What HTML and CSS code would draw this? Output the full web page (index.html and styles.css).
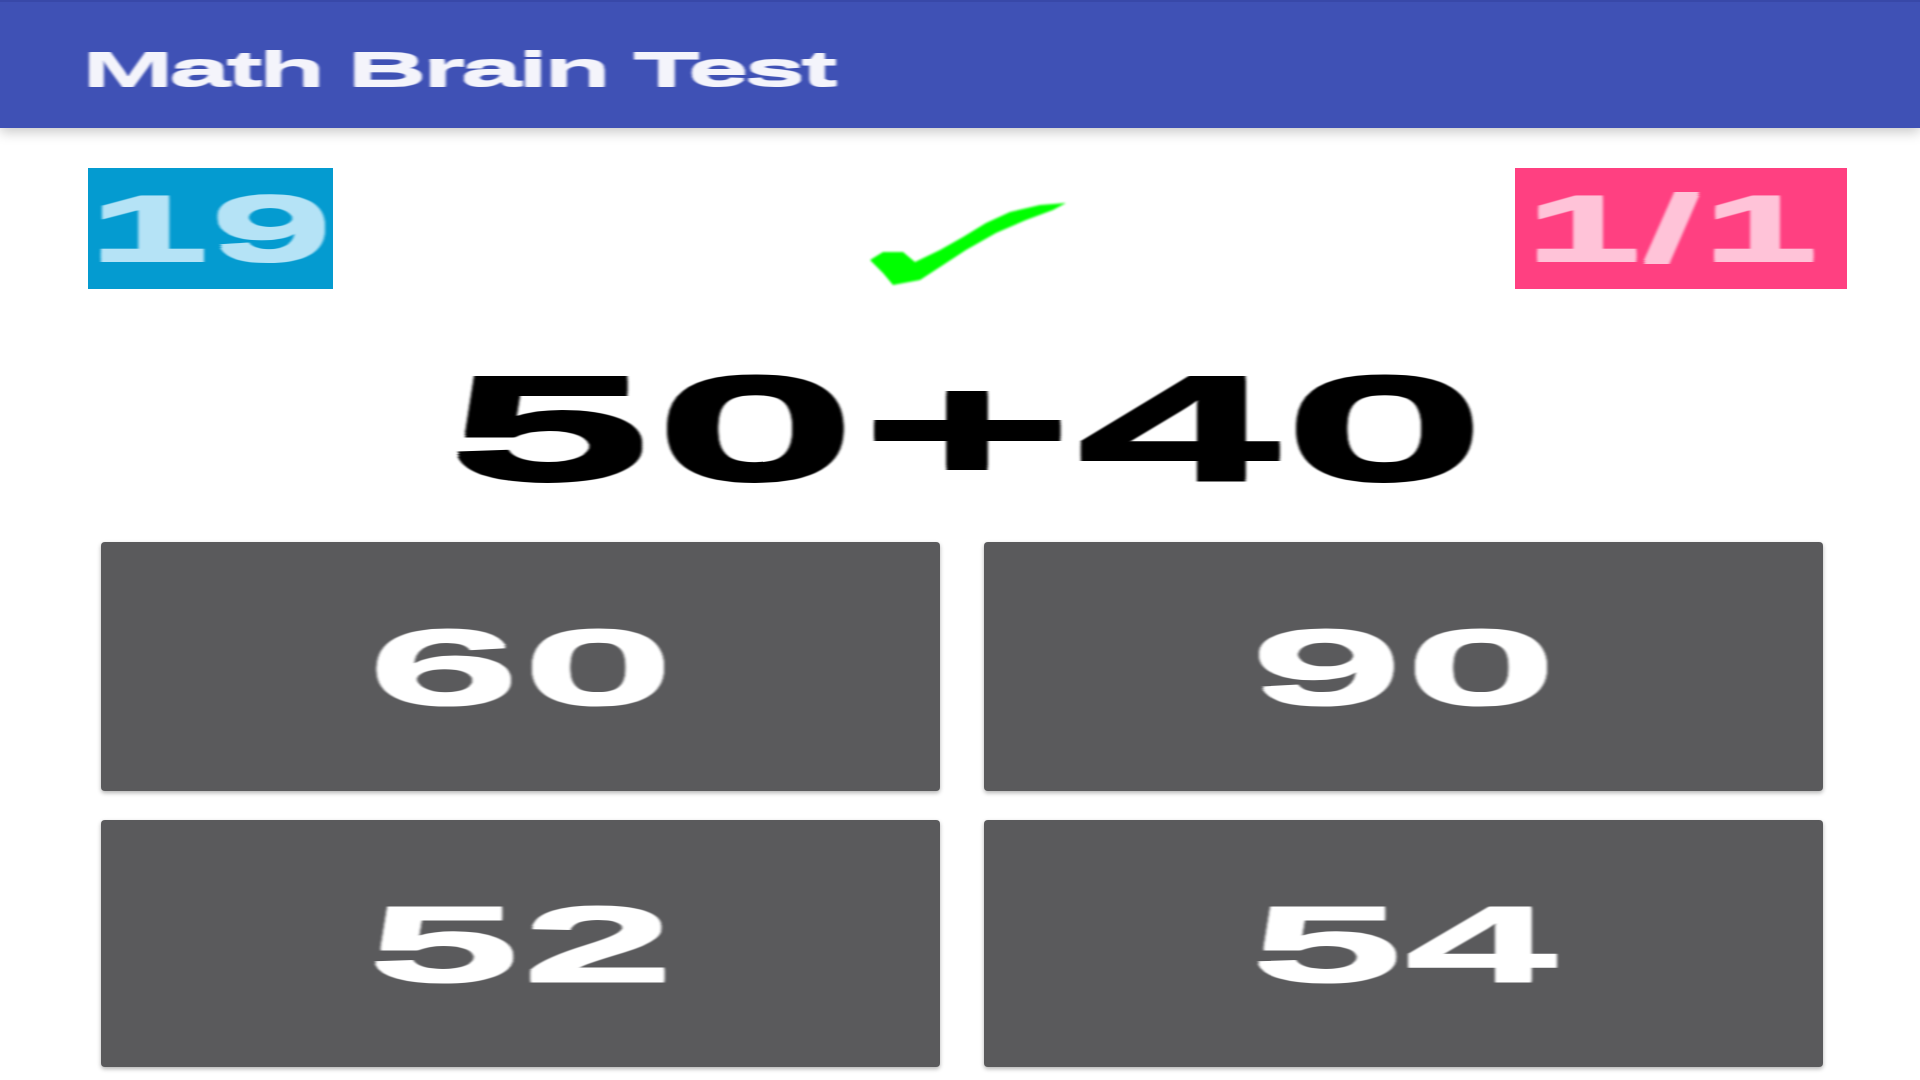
FILE: index.html
```html
<!DOCTYPE html>
<html lang="en">
<head>
  <meta charset="UTF-8">
  <meta name="viewport" content="width=device-width, initial-scale=1.0">
  <title>Math Brain Test</title>
  <link rel="stylesheet" href="styles.css">
</head>
<body>
  <header class="toolbar">
    <h1 class="toolbar-title"><span class="wide">Math Brain Test</span></h1>
  </header>

  <main class="game">
    <div class="status-row">
      <div class="timer"><span class="stretch">19</span></div>
      <svg class="check" viewBox="0 0 230 110" width="230" height="110" aria-label="correct">
        <polygon points="17,70 30,62 50,62 62,72 87,60 110,47 133,33 157,22 187,15 213,13 200,20 173,30 143,43 113,60 87,77 67,90 40,95 30,83" fill="#00ff00"/>
      </svg>
      <div class="score"><span class="stretch">1/1</span></div>
    </div>

    <div class="question"><span class="stretch">50+40</span></div>

    <div class="answers">
      <button class="answer"><span class="stretch">60</span></button>
      <button class="answer"><span class="stretch">90</span></button>
      <button class="answer"><span class="stretch">52</span></button>
      <button class="answer"><span class="stretch">54</span></button>
    </div>
  </main>
</body>
</html>
```

FILE: styles.css
```css
* {
  margin: 0;
  padding: 0;
  box-sizing: border-box;
  font-family: 'Liberation Sans', Arial, sans-serif;
}

body {
  background: #fff;
  width: 1920px;
  height: 1080px;
  overflow: hidden;
}

/* the screenshot is a phone screen pulled wide, so text is stretched
   and its horizontal strokes look heavier than the font's */
.stretch {
  display: inline-block;
  transform: scaleX(2.46);
  filter: blur(0.6px);
  text-shadow: 0 2px 0 currentColor, 0 -2px 0 currentColor;
}

.toolbar {
  height: 128px;
  background: #3f51b5;
  border-top: 2px solid #3848a8;
  padding: 43px 0 0 82px;
  box-shadow: 0 4px 12px rgba(0, 0, 0, 0.22);
  position: relative;
  z-index: 1;
}

.toolbar-title {
  font-size: 49px;
  line-height: 1;
  font-weight: bold;
  color: #f4f4fb;
}

.toolbar-title .wide {
  display: inline-block;
  letter-spacing: -2px;
  transform: scaleX(2.25);
  transform-origin: left center;
  filter: blur(0.6px);
  text-shadow: 0 1px 0 currentColor, 0 -1px 0 currentColor;
}

.game {
  padding: 40px 73px 0 88px;
}

.status-row {
  display: grid;
  grid-template-columns: 1fr auto 1fr;
  height: 121px;
}

.timer,
.score {
  height: 121px;
  display: flex;
  align-items: center;
  justify-content: center;
  font-size: 90px;
  line-height: 1;
  font-weight: bold;
}

.timer {
  width: 245px;
  justify-self: start;
  background: #049bd0;
  color: #b5e3f6;
}

.score {
  width: 332px;
  justify-self: end;
  padding-right: 18px;
  background: #ff4081;
  color: #ffc3d8;
}

.score .stretch {
  transform: scaleX(2.36);
}

.check {
  margin-top: 22px;
  filter: blur(1.2px);
}

.question {
  margin-top: 67px;
  text-align: center;
  font-size: 146px;
  line-height: 1;
  font-weight: bold;
  color: #000;
}

.question .stretch {
  transform: scaleX(2.54);
  text-shadow: 0 2.5px 0 currentColor, 0 -2.5px 0 currentColor;
}

.answers {
  display: grid;
  grid-template-columns: 839px 839px;
  grid-template-rows: 249px 247px;
  column-gap: 44px;
  row-gap: 29px;
  margin: 40px 0 0 13px;
}

.answer {
  border: none;
  border-radius: 4px;
  background: #5a5a5c;
  color: #fff;
  font-size: 106px;
  line-height: 1;
  font-weight: bold;
  display: flex;
  align-items: center;
  justify-content: center;
  box-shadow: 0 2px 4px rgba(0, 0, 0, 0.3);
}

.answer .stretch {
  transform: scaleX(2.62);
  text-shadow: 0 1.5px 0 currentColor, 0 -1.5px 0 currentColor;
}
```
